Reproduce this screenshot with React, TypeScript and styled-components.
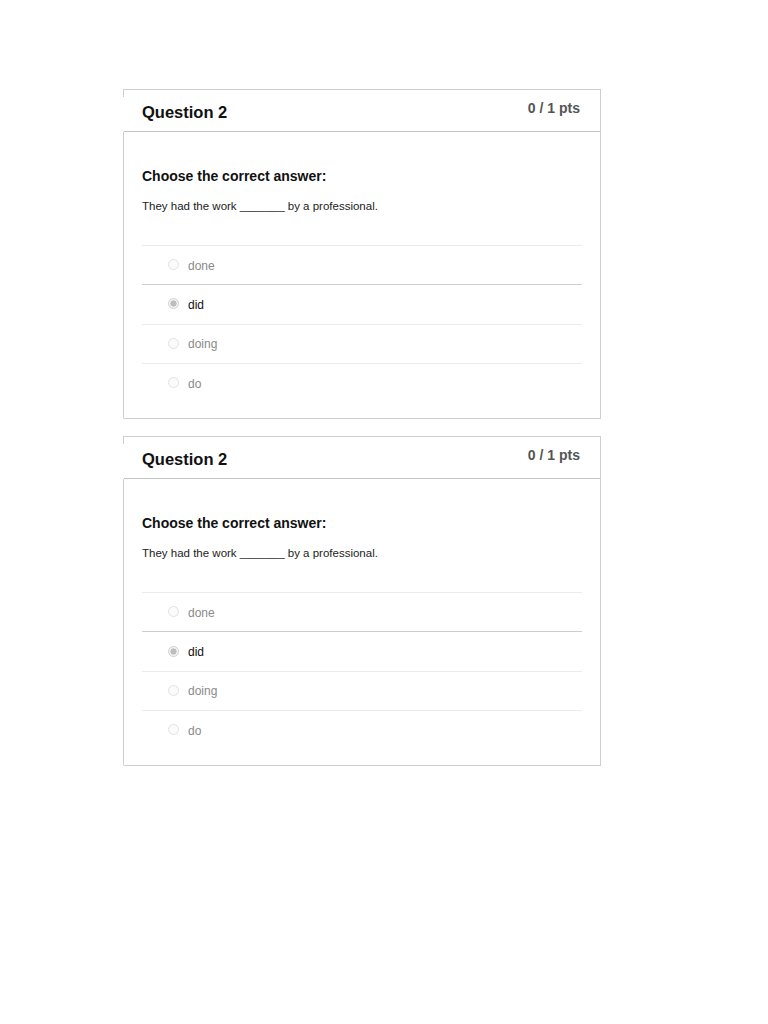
import React from "react";
import styled, { createGlobalStyle } from "styled-components";

const Global = createGlobalStyle`
  html, body { margin: 0; padding: 0; background: #ffffff; }
  body { font-family: "Liberation Sans", Arial, sans-serif; }
`;

const Page = styled.div`
  display: flex;
  flex-direction: column;
  gap: 17px;
  padding: 89px 0 0 123px;
  width: 478px;
`;

const Card = styled.section`
  border: 1px solid #cfcfcf;
  border-left-color: transparent;
  background: #fff;
`;

const Header = styled.header`
  position: relative;
  height: 41px;
  display: flex;
  justify-content: space-between;
  align-items: flex-start;
  padding: 0 20px 0 18px;
  border-bottom: 1px solid #c4c4c4;
  &::before {
    content: "";
    position: absolute;
    left: -1px;
    top: -1px;
    width: 1px;
    height: 8px;
    background: #cfcfcf;
  }
`;

const Title = styled.h2`
  margin: 0;
  padding-top: 12px;
  font-size: 16.5px;
  line-height: 20px;
  font-weight: 700;
  color: #111;
`;

const Points = styled.span`
  padding-top: 8px;
  font-size: 14px;
  line-height: 20px;
  font-weight: 700;
  color: #555;
`;

const Body = styled.div`
  border-left: 1px solid #cfcfcf;
  margin-left: -1px;
  padding: 34px 18px 16px 18px;
`;

const Prompt = styled.h3`
  margin: 0;
  font-size: 14px;
  line-height: 20px;
  font-weight: 700;
  color: #111;
`;

const Sentence = styled.p`
  margin: 12px 0 0;
  font-size: 11.5px;
  line-height: 16px;
  color: #222;
`;

const AnswerList = styled.div`
  margin-top: 31px;
  display: flex;
  flex-direction: column;
`;

const Answer = styled.div<{ $strong?: boolean }>`
  box-sizing: border-box;
  height: 39.3px;
  display: flex;
  align-items: center;
  gap: 9px;
  padding: 1px 0 0 26px;
  border-top: 1px solid ${(p) => (p.$strong ? "#cdcdcd" : "#ebebeb")};
`;

const Radio = styled.span<{ $checked?: boolean }>`
  width: 9px;
  height: 9px;
  border-radius: 50%;
  border: 1px solid ${(p) => (p.$checked ? "#d0d0d0" : "#e2e2e2")};
  background: ${(p) =>
    p.$checked
      ? "radial-gradient(circle, #bdbdbd 0 2.8px, #f4f4f4 3.4px)"
      : "#fbfbfb"};
  margin-bottom: 2px;
  flex: none;
`;

const AnswerText = styled.span<{ $checked?: boolean }>`
  font-size: 12px;
  line-height: 16px;
  color: ${(p) => (p.$checked ? "#111" : "#8a8a8a")};
`;

const answers = ["done", "did", "doing", "do"];
const chosen = "did";

function QuestionCard() {
  return (
    <Card>
      <Header>
        <Title>Question 2</Title>
        <Points>0 / 1 pts</Points>
      </Header>
      <Body>
        <Prompt>Choose the correct answer:</Prompt>
        <Sentence>They had the work _______ by a professional.</Sentence>
        <AnswerList>
          {answers.map((a) => (
            <Answer key={a} $strong={a === chosen}>
              <Radio $checked={a === chosen} />
              <AnswerText $checked={a === chosen}>{a}</AnswerText>
            </Answer>
          ))}
        </AnswerList>
      </Body>
    </Card>
  );
}

export default function App() {
  return (
    <>
      <Global />
      <Page>
        <QuestionCard />
        <QuestionCard />
      </Page>
    </>
  );
}
